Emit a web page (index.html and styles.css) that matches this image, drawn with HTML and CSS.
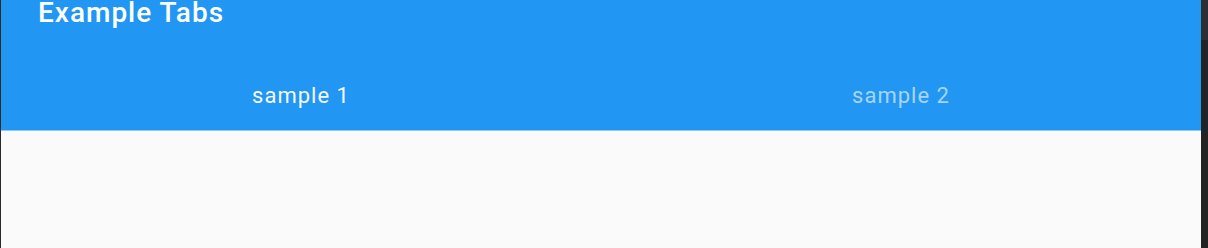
FILE: index.html
```html
<!DOCTYPE html>
<html>
<head>
<meta charset="utf-8">
<link rel="stylesheet" href="styles.css">
</head>
<body>
<div class="frame">
  <div class="edge-left"></div>
  <div class="app">
    <header class="appbar">
      <div class="title">Example Tabs</div>
      <nav class="tabs">
        <div class="tab active">sample 1</div>
        <div class="tab">sample 2</div>
      </nav>
    </header>
    <main class="content"></main>
  </div>
  <div class="edge-right"><div class="edge-right-top"></div></div>
</div>
</body>
</html>
```
FILE: styles.css
```css
html, body {
  margin: 0;
  padding: 0;
  background: #222222;
  height: 248px;
  overflow: hidden;
}
.frame {
  display: flex;
  height: 248px;
}
.edge-left {
  width: 1px;
  background: #2a2a2a;
}
.app {
  width: 1200px;
  display: flex;
  flex-direction: column;
  background: #fafafa;
  font-family: Roboto, "Liberation Sans", sans-serif;
}
.appbar {
  background: #2196f3;
  height: 130px;
  border-bottom: 1px solid #8fc6f5;
  display: flex;
  flex-direction: column;
}
.title {
  color: #ffffff;
  font-size: 28px;
  font-weight: 500;
  letter-spacing: 1px;
  line-height: 26px;
  padding-left: 37px;
  height: 72px;
}
.tabs {
  display: flex;
  flex: 1;
}
.tab {
  flex: 1;
  display: flex;
  align-items: center;
  justify-content: center;
  font-size: 22px;
  letter-spacing: 1px;
  color: rgba(255, 255, 255, 0.62);
  padding-bottom: 12px;
}
.tab.active {
  color: #f4f9fe;
}
.content {
  flex: 1;
}
.edge-right {
  width: 7px;
  background: #232323;
}
.edge-right-top {
  height: 40px;
  background: #2f2f2f;
}
```
